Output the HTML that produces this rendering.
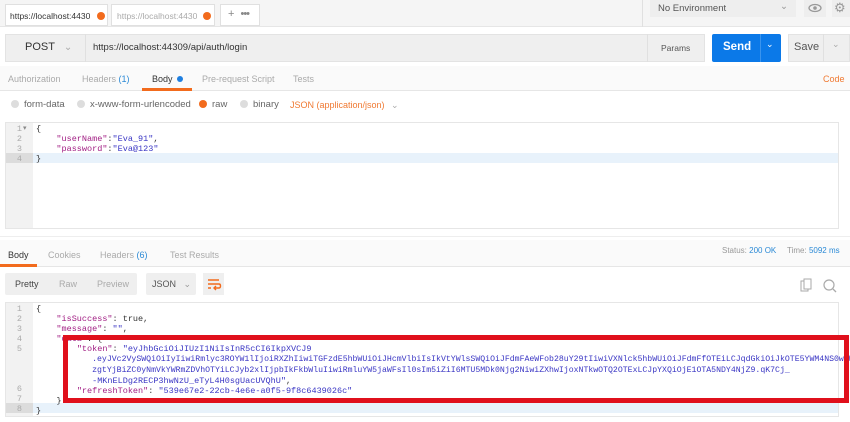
<!DOCTYPE html>
<html><head><style>
*{margin:0;padding:0;box-sizing:border-box}
body{width:850px;height:422px;overflow:hidden;background:#fff;font-family:"Liberation Sans",sans-serif;position:relative;color:#505050}
.a{position:absolute;white-space:nowrap}
.m{font-family:"Liberation Mono",monospace;font-size:8.5px;line-height:10px;white-space:pre}
.k{color:#a11d83}.s{color:#3a36c4}.n{color:#aaa;text-align:right;width:22px}
.dot{position:absolute;top:7px;width:8px;height:8px;border-radius:50%;background:#f26b1d}
.rad{display:inline-block;width:8px;height:8px;border-radius:50%;background:#ddd;vertical-align:-1px;margin-right:5px}
.lg{font-size:8.2px}
</style></head><body>
<div class="a" style="left:0;top:0;width:850px;height:27px;background:#f5f5f5;border-bottom:1px solid #e6e6e6"></div>
<div class="a" style="left:5px;top:4px;width:103px;height:22px;background:#fff;border:1px solid #e0e0e0;font-size:8.5px;padding:6px 4px;color:#333">https://localhost:4430<span class="dot" style="left:91px"></span></div>
<div class="a" style="left:111px;top:4px;width:104px;height:22px;background:#fff;border:1px solid #e0e0e0;font-size:8.5px;padding:6px 5px;color:#aaa">https://localhost:4430<span class="dot" style="left:91px"></span></div>
<div class="a" style="left:220px;top:4px;width:40px;height:22px;background:#fff;border:1px solid #e0e0e0;font-size:11px;color:#888;padding:3px 7px">+ <span style="margin-left:3px;letter-spacing:-1px">•••</span></div>
<div class="a" style="left:642px;top:0;width:1px;height:27px;background:#e0e0e0"></div>
<div class="a" style="left:650px;top:0;width:146px;height:17px;background:#eee;font-size:9.5px;padding:3px 8px;color:#555">No Environment<span style="position:absolute;right:8px;top:1px;color:#999">⌄</span></div>
<div class="a" style="left:804px;top:0;width:22px;height:17px;background:#eee"><svg width="22" height="17"><ellipse cx="11" cy="8" rx="6" ry="3.5" fill="none" stroke="#999" stroke-width="1.3"/><circle cx="11" cy="8" r="1.8" fill="#999"/></svg></div>
<div class="a" style="left:832px;top:0;width:18px;height:17px;background:#eee;color:#999;font-size:13px;line-height:15px;padding-left:2px">⚙</div>
<div class="a" style="left:5px;top:34px;width:700px;height:28px;background:#efefef;border:1px solid #e3e3e3"></div>
<div class="a" style="left:85px;top:34px;width:1px;height:28px;background:#e0e0e0"></div>
<div class="a" style="left:25px;top:41px;font-size:11px;color:#333">POST <span style="color:#aaa;font-size:10px;margin-left:6px">⌄</span></div>
<div class="a" style="left:93px;top:42px;font-size:9.5px;color:#333">https://localhost:44309/api/auth/login</div>
<div class="a" style="left:647px;top:34px;width:1px;height:28px;background:#e0e0e0"></div>
<div class="a" style="left:661px;top:43px;font-size:8.5px;color:#555">Params</div>
<div class="a" style="left:712px;top:34px;width:69px;height:28px;background:#0b79e8;border-radius:2px"></div>
<div class="a" style="left:723px;top:41px;font-size:11.5px;font-weight:bold;color:#fff">Send</div>
<div class="a" style="left:760px;top:34px;width:1px;height:28px;background:#3a94ee"></div>
<div class="a" style="left:766px;top:39px;font-size:9px;color:#fff">⌄</div>
<div class="a" style="left:788px;top:34px;width:62px;height:28px;background:#efefef;border:1px solid #e3e3e3"></div>
<div class="a" style="left:794px;top:41px;font-size:11px;color:#555">Save</div>
<div class="a" style="left:823px;top:34px;width:1px;height:28px;background:#e0e0e0"></div>
<div class="a" style="left:832px;top:39px;font-size:9px;color:#aaa">⌄</div>
<div class="a" style="left:0;top:66px;width:850px;height:25px;background:#fafafa;border-bottom:1px solid #e6e6e6"></div>
<div class="a" style="left:8px;top:74px;font-size:9px;color:#aaa">Authorization</div>
<div class="a" style="left:82px;top:74px;font-size:9px;color:#aaa">Headers <span style="color:#2b8ad6">(1)</span></div>
<div class="a" style="left:152px;top:74px;font-size:9px;color:#333">Body <span style="display:inline-block;width:6px;height:6px;border-radius:50%;background:#1f7fe0;margin-left:2px"></span></div>
<div class="a" style="left:142px;top:88px;width:50px;height:3px;background:#f26b1d"></div>
<div class="a" style="left:202px;top:74px;font-size:9px;color:#aaa">Pre-request Script</div>
<div class="a" style="left:293px;top:74px;font-size:9px;color:#aaa">Tests</div>
<div class="a" style="left:823px;top:74px;font-size:9px;color:#f07a33">Code</div>
<div class="a" style="left:11px;top:99px;font-size:9.5px;color:#666"><span class="rad"></span>form-data</div>
<div class="a" style="left:77px;top:99px;font-size:9.5px;color:#666"><span class="rad"></span>x-www-form-urlencoded</div>
<div class="a" style="left:199px;top:99px;font-size:9.5px;color:#666"><span class="rad" style="background:#f26b1d"></span>raw</div>
<div class="a" style="left:240px;top:99px;font-size:9.5px;color:#666"><span class="rad"></span>binary</div>
<div class="a" style="left:290px;top:100px;font-size:9px;color:#f07a33">JSON (application/json) <span style="color:#aaa;margin-left:4px">⌄</span></div>
<div class="a" style="left:5px;top:122px;width:834px;height:107px;border:1px solid #e6e6e6"></div>
<div class="a" style="left:6px;top:123px;width:27px;height:105px;background:#f2f2f2"></div>
<div class="a" style="left:6px;top:153px;width:832px;height:10px;background:#e8f2fb"></div>
<div class="a" style="left:6px;top:153px;width:27px;height:10px;background:#dcdcdc"></div>
<div class="a m" style="left:0;top:124px"><div class="n">1</div><div class="n">2</div><div class="n">3</div><div class="n">4</div></div>
<div class="a m" style="left:23px;top:124px;color:#888;font-size:7px">▾</div>
<div class="a m" style="left:36px;top:124px;color:#333">{
    <span class="k">"userName"</span>:<span class="s">"Eva_91"</span>,
    <span class="k">"password"</span>:<span class="s">"Eva@123"</span>
}</div>
<div class="a" style="left:0;top:236px;width:850px;height:1px;background:#eee"></div>
<div class="a" style="left:0;top:240px;width:850px;height:27px;background:#fafafa;border-bottom:1px solid #e6e6e6"></div>
<div class="a" style="left:8px;top:250px;font-size:9px;color:#333">Body</div>
<div class="a" style="left:0;top:264px;width:37px;height:3px;background:#f26b1d"></div>
<div class="a" style="left:48px;top:250px;font-size:9px;color:#aaa">Cookies</div>
<div class="a" style="left:100px;top:250px;font-size:9px;color:#aaa">Headers <span style="color:#2b8ad6">(6)</span></div>
<div class="a" style="left:170px;top:250px;font-size:9px;color:#aaa">Test Results</div>
<div class="a" style="left:722px;top:246px;font-size:8px;color:#999">Status: <span style="color:#2b8ad6">200 OK</span></div>
<div class="a" style="left:787px;top:246px;font-size:8px;color:#999">Time: <span style="color:#2b8ad6">5092 ms</span></div>
<div class="a" style="left:5px;top:273px;width:132px;height:22px;background:#efefef;border-radius:2px"></div>
<div class="a" style="left:15px;top:279px;font-size:9px;color:#444">Pretty</div>
<div class="a" style="left:59px;top:279px;font-size:9px;color:#aaa">Raw</div>
<div class="a" style="left:97px;top:279px;font-size:9px;color:#aaa">Preview</div>
<div class="a" style="left:146px;top:273px;width:50px;height:22px;background:#efefef;border-radius:2px;font-size:9px;color:#555;padding:6px 6px">JSON <span style="color:#999;margin-left:5px">⌄</span></div>
<div class="a" style="left:203px;top:273px;width:21px;height:22px;background:#efefef"><svg width="21" height="22"><path d="M5 7h11M5 11h11c2 0 2 4 0 4h-4M5 15h3M13 13l-2 2 2 2" fill="none" stroke="#f26b1d" stroke-width="1.4"/></svg></div>
<div class="a" style="left:800px;top:278px"><svg width="40" height="16"><rect x="1" y="3" width="7" height="10" fill="none" stroke="#aaa"/><rect x="4" y="1" width="7" height="10" fill="#fff" stroke="#aaa"/><circle cx="29" cy="7" r="5" fill="none" stroke="#aaa" stroke-width="1.2"/><path d="M33 11l3 3" stroke="#aaa" stroke-width="1.3"/></svg></div>
<div class="a" style="left:5px;top:302px;width:834px;height:115px;border:1px solid #e6e6e6"></div>
<div class="a" style="left:6px;top:303px;width:27px;height:113px;background:#f2f2f2"></div>
<div class="a" style="left:6px;top:403px;width:832px;height:10px;background:#e8f2fb"></div>
<div class="a" style="left:6px;top:403px;width:27px;height:10px;background:#dcdcdc"></div>
<div class="a m" style="left:0;top:304px"><div class="n">1</div><div class="n">2</div><div class="n">3</div><div class="n">4</div><div class="n">5</div><div class="n"> </div><div class="n"> </div><div class="n"> </div><div class="n">6</div><div class="n">7</div><div class="n">8</div></div>
<div class="a m" style="left:36px;top:304px;color:#333">{
    <span class="k">"isSuccess"</span>: true,
    <span class="k">"message"</span>: <span class="s">""</span>,
    <span class="k">"data"</span>: {
        <span class="k">"token"</span>: <span class="s">"eyJhbGciOiJIUzI1NiIsInR5cCI6IkpXVCJ9</span>
<span class="s">           <span class="lg">.eyJVc2VySWQiOiIyIiwiRmlyc3ROYW1lIjoiRXZhIiwiTGFzdE5hbWUiOiJHcmVlbiIsIkVtYWlsSWQiOiJFdmFAeWFob28uY29tIiwiVXNlck5hbWUiOiJFdmFfOTEiLCJqdGkiOiJkOTE5YWM4NS0wMWNhLTQ5M</span></span>
<span class="s">           <span class="lg">zgtYjBiZC0yNmVkYWRmZDVhOTYiLCJyb2xlIjpbIkFkbWluIiwiRmluYW5jaWFsIl0sIm5iZiI6MTU5MDk0Njg2NiwiZXhwIjoxNTkwOTQ2OTExLCJpYXQiOjE1OTA5NDY4NjZ9.qK7Cj_</span></span>
<span class="s">           -MKnELDg2RECP3hwNzU_eTyL4H0sgUacUVQhU"</span>,
        <span class="k">"refreshToken"</span>: <span class="s">"539e67e2-22cb-4e6e-a0f5-9f8c6439026c"</span>
    }
}</div>
<div class="a" style="left:63px;top:335px;width:786px;height:68px;border:5px solid #e0101c"></div>
</body></html>
